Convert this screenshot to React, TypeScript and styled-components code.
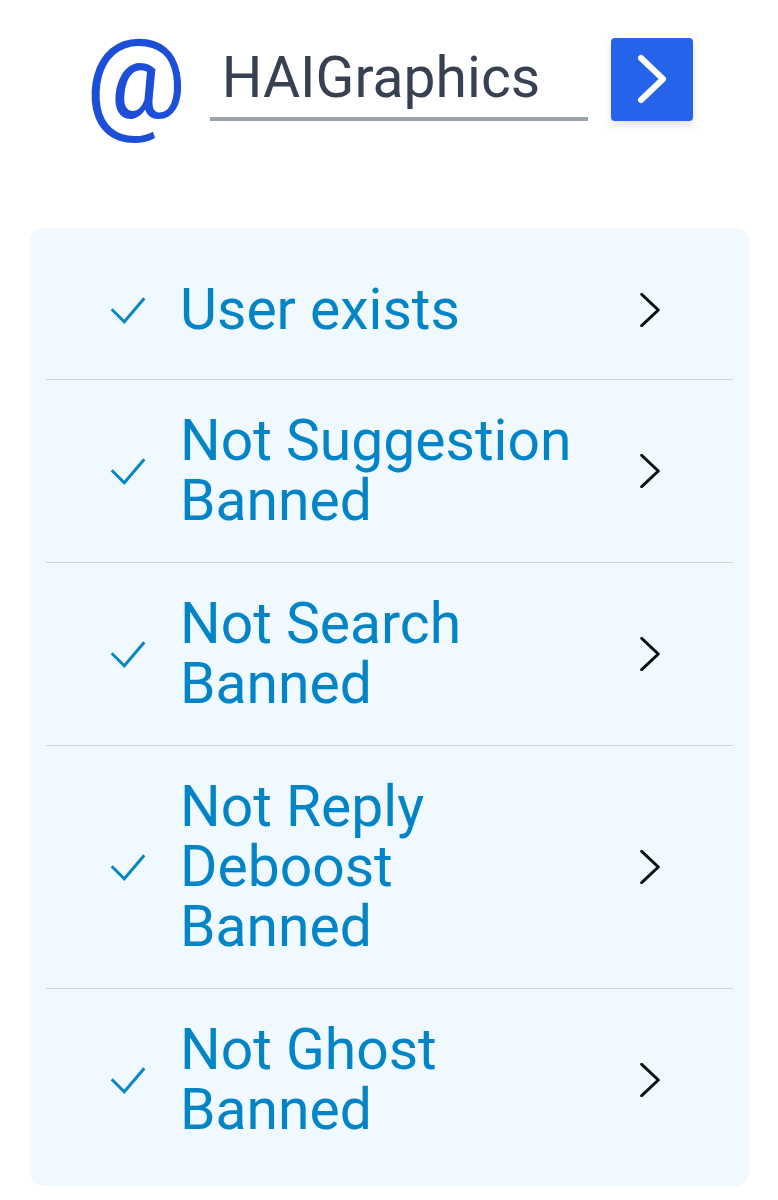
import { createGlobalStyle, styled } from "styled-components";

const GlobalStyle = createGlobalStyle`
  html, body {
    margin: 0;
    padding: 0;
    background: #fff;
    font-family: Roboto, "Noto Sans", "Liberation Sans", sans-serif;
  }
  * { box-sizing: border-box; }
`;

const Page = styled.main`
  width: 778px;
  padding: 37px 29px 0 30px;
`;

const Header = styled.form`
  display: flex;
  align-items: center;
  justify-content: center;
  height: 84px;
  padding-right: 1px;
`;

const AtSign = styled.span`
  font-size: 113px;
  line-height: 84px;
  color: #1d4ed8;
  margin-top: 2px;
`;

const HandleInput = styled.input`
  width: 378px;
  height: 83px;
  margin-left: 23px;
  padding: 0 0 0 12px;
  border: none;
  border-bottom: 4px solid #9ca3af;
  background: transparent;
  font-family: Roboto, sans-serif;
  font-size: 57px;
  color: #374151;
  outline: none;
`;

const GoButton = styled.button`
  width: 82px;
  height: 83px;
  margin-left: 23px;
  border: none;
  border-radius: 4px;
  background: #2563eb;
  box-shadow: 0 4px 8px rgba(0, 0, 0, 0.12);
  display: flex;
  align-items: center;
  justify-content: center;
  padding: 0;
`;

const Card = styled.section`
  margin-top: 107px;
  width: 719px;
  background: #f0f9ff;
  border-radius: 14px;
  padding: 12px 16px 15px;
`;

const Row = styled.div`
  display: flex;
  align-items: center;
  padding: 31px 63px 31px 64px;
  min-height: 139px;
  & + & {
    border-top: 1px solid #ccd5de;
  }
`;

const CheckIcon = styled.svg`
  width: 36px;
  height: 28px;
  flex: none;
`;

const Label = styled.div`
  width: 402px;
  margin-left: 34px;
  font-size: 57px;
  line-height: 60px;
  color: #0284c7;
`;

const ChevronIcon = styled.svg`
  width: 20px;
  height: 34px;
  flex: none;
  margin-left: auto;
  margin-right: 10px;
`;

const checks = [
  "User exists",
  "Not Suggestion Banned",
  "Not Search Banned",
  "Not Reply Deboost Banned",
  "Not Ghost Banned",
];

function CheckRow({ text }: { text: string }) {
  return (
    <Row>
      <CheckIcon viewBox="0 0 36 28">
        <polyline points="1.7,13.3 14.3,25.7 34.3,2.3" fill="none" stroke="#0a86c2" strokeWidth="3" />
      </CheckIcon>
      <Label>{text}</Label>
      <ChevronIcon viewBox="0 0 20 34">
        <polyline points="1.7,1.3 18.3,17 1.7,32.7" fill="none" stroke="#111" strokeWidth="3" strokeLinecap="round" strokeLinejoin="round" />
      </ChevronIcon>
    </Row>
  );
}

export default function App() {
  return (
    <>
      <GlobalStyle />
      <Page>
        <Header onSubmit={e => e.preventDefault()}>
          <AtSign>@</AtSign>
          <HandleInput readOnly value="HAIGraphics" />
          <GoButton type="submit">
            <svg width="30" height="50" viewBox="0 0 30 50">
              <polyline points="4,4 26,25 4,46" fill="none" stroke="#fff" strokeWidth="6" strokeLinecap="round" strokeLinejoin="round" />
            </svg>
          </GoButton>
        </Header>
        <Card>
          {checks.map(c => <CheckRow key={c} text={c} />)}
        </Card>
      </Page>
    </>
  );
}
